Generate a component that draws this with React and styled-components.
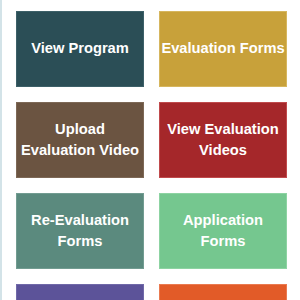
import React from "react";
import styled, { createGlobalStyle } from "styled-components";

const GlobalStyle = createGlobalStyle`
  html, body {
    margin: 0;
    padding: 0;
    background: #ffffff;
    font-family: "Liberation Sans", Arial, sans-serif;
  }
`;

const tiles = [
  { label: "View Program", color: "#2b4e56", edge: "#3d6068" },
  { label: "Evaluation Forms", color: "#c8a13a", edge: "#d6b65e" },
  { label: "Upload Evaluation Video", color: "#6b5441", edge: "#7d6856" },
  { label: "View Evaluation Videos", color: "#a5272a", edge: "#c04a4c" },
  { label: "Re-Evaluation Forms", color: "#5b8a7e", edge: "#729c91" },
  { label: "Application Forms", color: "#75c78f", edge: "#8dd3a2" },
  { label: "Interview Schedule", color: "#5c5399", edge: "#7069a8" },
  { label: "Final Results", color: "#e25b28", edge: "#ea7a50" },
];

const Dashboard = () => {
  return (
    <>
      <GlobalStyle />
      <Page>
        <Grid>
          {tiles.map(tile => (
            <Tile key={tile.label} $color={tile.color} $edge={tile.edge}>
              {tile.label}
            </Tile>
          ))}
        </Grid>
      </Page>
    </>
  );
};

const Page = styled.div`
  min-height: 100vh;
  border-left: 2px solid #d3e3e8;
  padding: 11px 13px 20px 14px;
  box-sizing: border-box;
`;

const Grid = styled.div`
  display: grid;
  grid-template-columns: 128px 128px;
  column-gap: 15px;
  row-gap: 15px;
`;

const Tile = styled.div`
  height: 76px;
  box-sizing: border-box;
  background: ${p => p.$color};
  border: 1px solid ${p => p.$edge};
  color: #ffffff;
  font-weight: 700;
  font-size: 14.7px;
  line-height: 21.5px;
  text-align: center;
  display: flex;
  align-items: center;
  justify-content: center;
  padding: 0 1px;
`;

export default Dashboard;
